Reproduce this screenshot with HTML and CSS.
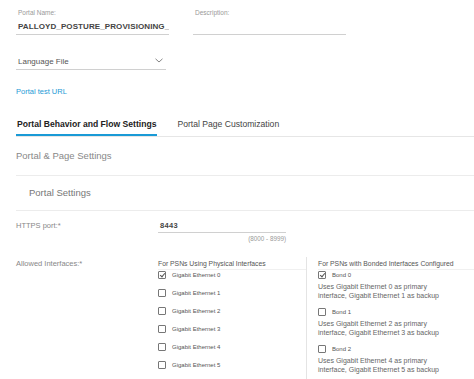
FILE: index.html
```html
<!DOCTYPE html>
<html>
<head>
<meta charset="utf-8">
<link rel="stylesheet" href="styles.css">
</head>
<body>
<div class="page">
  <div class="fields">
    <div class="field f-name">
      <div class="flabel">Portal Name:</div>
      <div class="fvalue">PALLOYD_POSTURE_PROVISIONING_PORTAL</div>
    </div>
    <div class="field f-desc">
      <div class="flabel">Description:</div>
      <div class="fvalue"></div>
    </div>
  </div>
  <div class="select">
    <span>Language File</span>
    <svg class="chev" width="8" height="5" viewBox="0 0 8 5"><path d="M0.5 0.8 L4 4 L7.5 0.8" fill="none" stroke="#777" stroke-width="0.9"/></svg>
  </div>
  <div class="link">Portal test URL</div>
  <div class="tabs">
    <div class="tab active">Portal Behavior and Flow Settings</div>
    <div class="tab">Portal Page Customization</div>
  </div>
  <div class="sec1">Portal &amp; Page Settings</div>
  <div class="sec2">Portal Settings</div>
  <div class="row port">
    <div class="rlabel">HTTPS port:*</div>
    <div class="portbox">
      <div class="portval">8443</div>
      <div class="range">(8000 - 8999)</div>
    </div>
  </div>
  <div class="row ifaces">
    <div class="rlabel">Allowed Interfaces:*</div>
    <div class="col phys">
      <div class="colhead">For PSNs Using Physical Interfaces</div>
      <div class="cb"><span class="box checked"></span><span>Gigabit Ethernet 0</span></div>
      <div class="cb"><span class="box"></span><span>Gigabit Ethernet 1</span></div>
      <div class="cb"><span class="box"></span><span>Gigabit Ethernet 2</span></div>
      <div class="cb"><span class="box"></span><span>Gigabit Ethernet 3</span></div>
      <div class="cb"><span class="box"></span><span>Gigabit Ethernet 4</span></div>
      <div class="cb"><span class="box"></span><span>Gigabit Ethernet 5</span></div>
    </div>
    <div class="col bond">
      <div class="colhead">For PSNs with Bonded Interfaces Configured</div>
      <div class="bd">
        <div class="cb"><span class="box checked"></span><span>Bond 0</span></div>
        <div class="bdesc">Uses Gigabit Ethernet 0 as primary<br>interface, Gigabit Ethernet 1 as backup</div>
      </div>
      <div class="bd">
        <div class="cb"><span class="box"></span><span>Bond 1</span></div>
        <div class="bdesc">Uses Gigabit Ethernet 2 as primary<br>interface, Gigabit Ethernet 3 as backup</div>
      </div>
      <div class="bd">
        <div class="cb"><span class="box"></span><span>Bond 2</span></div>
        <div class="bdesc">Uses Gigabit Ethernet 4 as primary<br>interface, Gigabit Ethernet 5 as backup</div>
      </div>
    </div>
  </div>
</div>
</body>
</html>
```
FILE: styles.css
```css
html, body { margin: 0; padding: 0; background: #fff; }
body { font-family: "Liberation Sans", Arial, sans-serif; color: #333; overflow: hidden; }
.page { padding: 8px 0 0 16px; width: 458px; }

.fields { display: flex; gap: 24px; }
.field { border-bottom: 1px solid #d0d0d0; }
.f-name { width: 153px; }
.f-desc { width: 153px; }
.flabel { font-size: 6.5px; color: #999; height: 10px; line-height: 10px; padding-left: 2px; }
.fvalue { font-size: 8px; font-weight: bold; color: #444; letter-spacing: 0.1px; height: 16px; line-height: 18px; padding-left: 2px; white-space: nowrap; overflow: hidden; }

.select { width: 150px; margin-top: 18px; height: 17px; border-bottom: 1px solid #d0d0d0; display: flex; align-items: center; justify-content: space-between; font-size: 8px; color: #555; padding: 0 3px 0 2px; box-sizing: border-box; }
.chev { margin-top: -1px; }

.link { font-size: 7.5px; color: #1e9ad6; margin-top: 17px; height: 10px; line-height: 10px; }

.tabs { display: flex; margin-top: 19px; border-bottom: 1px solid #e6e6e6; }
.tab { font-size: 8.6px; color: #444; height: 18px; line-height: 17px; padding: 0 1px; margin-right: 19px; }
.tab.active { font-weight: bold; color: #222; border-bottom: 2px solid #1a9ad6; }

.sec1 { font-size: 9.5px; color: #888; height: 38px; line-height: 38px; border-bottom: 1px solid #ececec; }
.sec2 { font-size: 9.5px; color: #777; height: 34px; line-height: 34px; padding-left: 13px; border-bottom: 1px solid #ececec; }

.row { display: flex; }
.rlabel { width: 142px; font-size: 7.5px; color: #888; }
.port { padding-top: 10px; height: 34px; }
.port .rlabel { line-height: 10px; }
.portbox { width: 128px; }
.portval { font-size: 7.5px; font-weight: bold; color: #444; height: 11px; line-height: 10px; padding-left: 2px; border-bottom: 1px solid #d0d0d0; letter-spacing: 0.3px; }
.range { font-size: 6.3px; color: #999; text-align: right; line-height: 9px; margin-top: 1px; }

.ifaces { margin-top: 2px; }
.ifaces .rlabel { line-height: 13px; }
.col { font-size: 6.5px; }
.phys { width: 148px; border-right: 1px solid #e4e4e4; }
.bond { padding-left: 11px; flex: 1; }
.colhead { font-size: 6.8px; color: #555; height: 12px; line-height: 13px; border-bottom: 1px solid #f0f0f0; white-space: nowrap; }
.cb { display: flex; align-items: center; gap: 6px; font-size: 6px; color: #555; height: 10px; }
.phys .cb { margin-bottom: 8px; }
.box { width: 6px; height: 6px; border: 1px solid #777; border-radius: 1px; position: relative; flex: none; }
.box.checked::after { content: ""; position: absolute; left: 1.5px; top: 0px; width: 2px; height: 4px; border-right: 1px solid #555; border-bottom: 1px solid #555; transform: rotate(40deg); }
.bd { margin-bottom: 7.5px; }
.bdesc { font-size: 7px; color: #666; line-height: 9px; margin-top: 1.5px; white-space: nowrap; }
```
